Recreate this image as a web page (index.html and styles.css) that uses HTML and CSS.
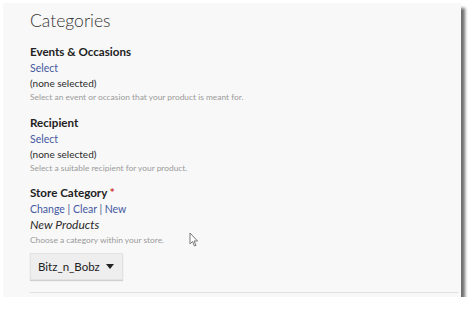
FILE: index.html
```html
<!DOCTYPE html>
<html>
  <head lang="en">
    <meta charset="UTF-8" />
    <title>Categories</title>
    <link rel="stylesheet" href="styles.css">
  </head>

  <body>
    <div class="panel">
      <h2 class="title">Categories</h2>

      <div class="field first">
        <div class="label">Events &amp; Occasions</div>
        <div class="links"><a href="#">Select</a></div>
        <div class="value">(none selected)</div>
        <div class="help">Select an event or occasion that your product is meant for.</div>
      </div>

      <div class="field">
        <div class="label">Recipient</div>
        <div class="links"><a href="#">Select</a></div>
        <div class="value">(none selected)</div>
        <div class="help">Select a suitable recipient for your product.</div>
      </div>

      <div class="field last">
        <div class="label">Store Category <span class="req">*</span></div>
        <div class="links"><a href="#">Change</a> | <a href="#">Clear</a> | <a href="#">New</a></div>
        <div class="value current">New Products</div>
        <div class="help">Choose a category within your store.</div>
        <div class="dropdown">Bitz_n_Bobz <span class="caret"></span></div>
      </div>

      <div class="divider"></div>

      <svg class="cursor" width="12" height="16" viewBox="0 0 12 16">
        <path d="M1 1 L1 12 L3.5 9.5 L5.5 14 L7 13.3 L5 9 L8.5 9 Z" fill="#fff" stroke="#777" stroke-width="1" stroke-linejoin="round" />
      </svg>
    </div>
  </body>
</html>
```

FILE: styles.css
```css
body {
  margin: 0;
  padding: 0;
  background-color: #ffffff;
  font-family: "Lato", "Open Sans", "Liberation Sans", sans-serif;
  color: #222;
}

.panel {
  position: relative;
  margin: 3px 0 0 3px;
  width: 458px;
  height: 294px;
  padding: 6px 0 0 27px;
  box-sizing: border-box;
  background-color: #f8f8f8;
  box-shadow: 4px 5px 3px #6f6f6f;
}

.title {
  margin: 0;
  font-size: 17.5px;
  line-height: 24px;
  font-weight: 300;
  color: #333;
}

.field {
  margin-top: 11px;
}

.field.last {
  margin-top: 10px;
}

.label {
  font-size: 11.6px;
  line-height: 16px;
  font-weight: bold;
  color: #222;
}

.req {
  color: #d0342c;
}

.links {
  font-size: 10.5px;
  line-height: 16px;
  color: #4a5a8c;
}

.links a {
  color: #4559a0;
  text-decoration: none;
}

.value {
  font-size: 10px;
  line-height: 14px;
  color: #2a2a2a;
}

.value.current {
  font-size: 12px;
  line-height: 16px;
  font-style: italic;
}

.help {
  font-size: 8.4px;
  line-height: 14px;
  color: #9a9a9a;
}

.dropdown {
  display: inline-flex;
  align-items: center;
  gap: 6px;
  margin-top: 6px;
  height: 27px;
  padding: 0 8px 0 7px;
  box-sizing: border-box;
  background-color: #eeeeee;
  border: 1px solid #e2e2e2;
  box-shadow: 0 1px 1px #d0d0d0;
  font-size: 11.5px;
  color: #222;
}

.caret {
  width: 0;
  height: 0;
  border-left: 4px solid transparent;
  border-right: 4px solid transparent;
  border-top: 5px solid #222;
}

.divider {
  margin-top: 12px;
  margin-right: 3px;
  border-top: 1px solid #e0e0e0;
}

.cursor {
  position: absolute;
  left: 186px;
  top: 229px;
}
```
